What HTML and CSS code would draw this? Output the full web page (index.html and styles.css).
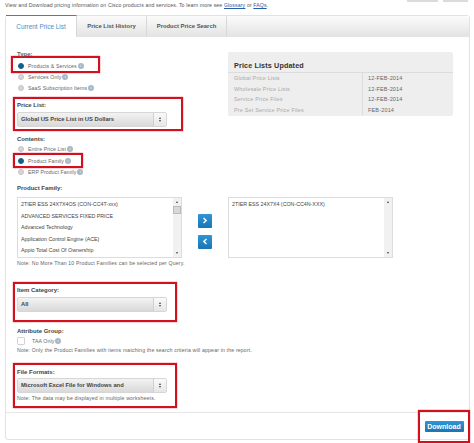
FILE: index.html
```html
<!DOCTYPE html>
<html lang="en">
<head>
    <meta charset="UTF-8">
    <meta name="viewport" content="width=device-width, initial-scale=1.0">
    <title>Current Price List</title>
    <link rel="stylesheet" href="styles.css">
</head>
<body>
    <div class="top-row">
        <p class="intro">View and Download pricing information on Cisco products and services. To learn more see <a href="#">Glossary</a> or <a href="#">FAQs</a>.</p>
        <div class="top-buttons">
            <span class="top-button wide"></span>
            <span class="top-button"></span>
        </div>
    </div>

    <div class="panel">
        <div class="tabs">
            <div class="tab active">Current Price List</div>
            <div class="tab">Price List History</div>
            <div class="tab">Product Price Search</div>
            <div class="tab-rest"></div>
        </div>

        <div class="panel-body">
            <div class="top-columns">
                <div class="options">
                    <div class="label type-label">Type:</div>
                    <div class="mark type-mark">
                        <div class="radio-row"><span class="radio on"></span>Products &amp; Services<span class="info">i</span></div>
                    </div>
                    <div class="radio-row after-mark"><span class="radio"></span>Services Only<span class="info">i</span></div>
                    <div class="radio-row"><span class="radio"></span>SaaS Subscription Items<span class="info">i</span></div>

                    <div class="mark price-mark">
                        <div class="label">Price List:</div>
                        <div class="select">
                            <span class="select-text">Global US Price List in US Dollars</span>
                            <span class="select-arrows"><i class="up"></i><i class="down"></i></span>
                        </div>
                    </div>

                    <div class="label contents-label">Contents:</div>
                    <div class="radio-row"><span class="radio"></span>Entire Price List<span class="info">i</span></div>
                    <div class="mark family-mark">
                        <div class="radio-row"><span class="radio on"></span>Product Family<span class="info">i</span></div>
                    </div>
                    <div class="radio-row after-mark"><span class="radio"></span>ERP Product Family<span class="info">i</span></div>
                </div>

                <div class="updated">
                    <h2>Price Lists Updated</h2>
                    <div class="updated-row"><span>Global Price Lists</span><b>12-FEB-2014</b></div>
                    <div class="updated-row"><span>Wholesale Price Lists</span><b>12-FEB-2014</b></div>
                    <div class="updated-row"><span>Service Price Files</span><b>12-FEB-2014</b></div>
                    <div class="updated-row"><span>Pre Set Service Price Files</span><b>FEB-2014</b></div>
                </div>
            </div>

            <div class="label family-label">Product Family:</div>
            <div class="picker">
                <div class="listbox">
                    <div class="list-items">
                        <div>2TIER ESS 24X7X4OS (CON-CC4T-xxx)</div>
                        <div>ADVANCED SERVICES FIXED PRICE</div>
                        <div>Advanced Technology</div>
                        <div>Application Control Engine (ACE)</div>
                        <div>Appio Total Cost Of Ownership</div>
                    </div>
                    <div class="scrollbar">
                        <i class="up"></i>
                        <span class="thumb"></span>
                        <i class="down"></i>
                    </div>
                </div>
                <div class="move-buttons">
                    <button class="move">
                        <svg width="6" height="7" viewBox="0 0 6 7"><path d="M1.5 1 4.2 3.5 1.5 6" fill="none" stroke="#fff" stroke-width="1.4"/></svg>
                    </button>
                    <button class="move">
                        <svg width="6" height="7" viewBox="0 0 6 7"><path d="M4.5 1 1.8 3.5 4.5 6" fill="none" stroke="#fff" stroke-width="1.4"/></svg>
                    </button>
                </div>
                <div class="listbox">
                    <div class="list-items">
                        <div>2TIER ESS 24X7X4 (CON-CC4N-XXX)</div>
                    </div>
                    <div class="scrollbar plain">
                        <i class="up"></i>
                        <i class="down"></i>
                    </div>
                </div>
            </div>
            <p class="note family-note">Note: No More Than 10 Product Families can be selected per Query.</p>

            <div class="mark category-mark">
                <div class="label">Item Category:</div>
                <div class="select">
                    <span class="select-text">All</span>
                    <span class="select-arrows"><i class="up"></i><i class="down"></i></span>
                </div>
            </div>

            <div class="label attribute-label">Attribute Group:</div>
            <div class="check-row"><span class="checkbox"></span>TAA Only<span class="info">i</span></div>
            <p class="note attribute-note">Note: Only the Product Families with items matching the search criteria will appear in the report.</p>

            <div class="mark format-mark">
                <div class="label">File Formats:</div>
                <div class="select">
                    <span class="select-text">Microsoft Excel File for Windows and</span>
                    <span class="select-arrows"><i class="up"></i><i class="down"></i></span>
                </div>
                <p class="note">Note: The data may be displayed in multiple worksheets.</p>
            </div>
        </div>

        <div class="panel-footer">
            <div class="download-mark">
                <button class="download">Download</button>
            </div>
        </div>
    </div>
</body>
</html>
```

FILE: styles.css
```css
* {
    box-sizing: border-box;
}

html, body {
    height: 443px;
    overflow: hidden;
}

body {
    margin: 0;
    background-color: white;
    font-family: "Liberation Sans", Arial, sans-serif;
    font-size: 6px;
    color: #555;
}

p {
    margin: 0;
}

/* top line */
.top-row {
    display: flex;
    justify-content: space-between;
    height: 15px;
    padding-left: 5px;
}

.intro {
    font-size: 5.2px;
    letter-spacing: 0.022em;
    line-height: 11px;
    color: #555;
}

.intro a {
    color: #2a5ca8;
}

.top-buttons {
    display: flex;
    gap: 5px;
    padding-right: 6px;
}

.top-button {
    width: 25px;
    height: 2px;
    background-color: #d8dcdc;
}

.top-button.wide {
    width: 31px;
}

/* panel */
.panel {
    width: 465px;
    height: 425px;
    margin-left: 5px;
    border: 1px solid #e2e2e2;
    border-radius: 3px;
    display: flex;
    flex-direction: column;
}

.tabs {
    display: flex;
    height: 21px;
    flex-shrink: 0;
    background: linear-gradient(#fbfbfb, #e3e3e3);
}

.tab {
    height: 21px;
    line-height: 20px;
    padding: 0 9px;
    border-right: 1px solid #d8d8d8;
    font-size: 5.9px;
    font-weight: bold;
    color: #555;
    white-space: nowrap;
}

.tab.active {
    width: 71px;
    height: 22px;
    background: white;
    border-top: 1px solid #3f83b5;
    color: #4a8fc4;
    font-size: 6.4px;
    font-weight: normal;
    text-align: center;
    padding: 0;
    margin-top: -1px;
    line-height: 21px;
}

.tab:nth-child(2) {
    width: 70px;
    text-align: center;
    padding: 0;
}

.tab:nth-child(3) {
    width: 80px;
    text-align: center;
    padding: 0;
}

.panel-body {
    flex: 1;
    padding: 0 0 0 11px;
}

.top-columns {
    display: flex;
}

.options {
    width: 211px;
}

.label {
    font-size: 6px;
    font-weight: bold;
    color: #444;
    line-height: 8px;
}

.type-label {
    padding-top: 13px;
    height: 19px;
    color: #666;
}

/* red highlight boxes */
.mark {
    border: 2px solid #d3101f;
    box-shadow: 0 0 1px #d3101f;
    margin-left: -4px;
}

.type-mark {
    width: 89px;
    height: 17px;
    margin-left: -6px;
    padding-left: 4px;
    padding-top: 2px;
}

.price-mark {
    width: 170px;
    height: 34px;
    margin-top: 3.5px;
    padding: 2px 0 0 2px;
}

.family-mark {
    width: 70px;
    height: 15px;
    margin-top: -1.5px;
    padding-left: 2px;
}

.category-mark {
    width: 164px;
    height: 40px;
    margin-top: 15px;
    padding: 2px 0 0 2px;
}

.format-mark {
    width: 164px;
    height: 45px;
    margin-top: 9px;
    padding: 3px 0 0 2px;
}

/* radios */
.radio-row, .check-row {
    display: flex;
    align-items: center;
    height: 11px;
    font-size: 5.2px;
    letter-spacing: 0.02em;
    color: #666;
}

.radio-row.after-mark {
    margin-top: -1.5px;
}

.radio {
    width: 6px;
    height: 6px;
    margin: 0 4px 0 1px;
    border-radius: 50%;
    background-color: #d6d6d6;
    border: 1px solid #c4c4c4;
}

.radio.on {
    background-color: #13608f;
    border-color: #13608f;
}

.info {
    width: 6px;
    height: 6px;
    margin-left: 1px;
    border-radius: 50%;
    background-color: #a8b8c4;
    color: white;
    font-size: 4px;
    line-height: 6px;
    text-align: center;
}

/* selects */
.select {
    display: flex;
    width: 150px;
    height: 15px;
    margin-top: 3px;
    border: 1px solid #d6d6d6;
    border-radius: 2px;
    background: linear-gradient(#f3f3f3, #d9d9d9);
}

.format-mark .select {
    margin-top: 2px;
}

.select-text {
    flex: 1;
    padding-left: 3px;
    font-size: 5.8px;
    font-weight: bold;
    line-height: 13px;
    color: #444;
    white-space: nowrap;
}

.select-arrows {
    width: 13px;
    display: flex;
    flex-direction: column;
    align-items: center;
    justify-content: center;
    gap: 1px;
    border-left: 1px solid #d0d0d0;
    background: linear-gradient(#fafafa, #e6e6e6);
}

.up, .down {
    display: block;
    width: 0;
    height: 0;
    border-left: 1.5px solid transparent;
    border-right: 1.5px solid transparent;
}

.up {
    border-bottom: 2px solid #444;
}

.down {
    border-top: 2px solid #444;
}

.contents-label {
    margin-top: 4px;
    height: 8.5px;
}

/* price lists updated */
.updated {
    width: 225px;
    height: 64px;
    margin-top: 15px;
    padding-top: 10px;
    background-color: #eeeeee;
    border-radius: 2px;
}

.updated h2 {
    margin: 0;
    height: 11px;
    padding-left: 6px;
    font-size: 7.2px;
    letter-spacing: 0.02em;
    line-height: 8px;
    color: #333;
    border-bottom: 1px solid #dcdcdc;
}

.updated-row {
    display: flex;
    height: 10.5px;
    line-height: 10.5px;
    font-size: 5.5px;
    letter-spacing: 0.03em;
    color: #aaa;
}

.updated-row span {
    width: 135px;
    padding-left: 6px;
    border-right: 1px solid #dcdcdc;
}

.updated-row b {
    padding-left: 5px;
    font-weight: normal;
    color: #666;
}

/* product family picker */
.family-label {
    margin-top: 6.5px;
    height: 13px;
}

.picker {
    display: flex;
    align-items: center;
}

.listbox {
    display: flex;
    width: 165px;
    height: 61px;
    border: 1px solid #dcdcdc;
    background-color: white;
}

.list-items {
    flex: 1;
    padding: 1px 3px;
    font-size: 5.3px;
    color: #444;
    line-height: 11.5px;
    white-space: nowrap;
}

.scrollbar {
    width: 8px;
    display: flex;
    flex-direction: column;
    align-items: center;
    justify-content: flex-start;
    padding: 3px 0;
    background-color: #f1f1f1;
}

.scrollbar .thumb {
    width: 8px;
    height: 8px;
    margin-top: 3px;
    background-color: #d8d8d8;
    border: 1px solid #bbb;
}

.scrollbar .down {
    margin-top: auto;
}

.move-buttons {
    width: 46px;
    padding-top: 7px;
    display: flex;
    flex-direction: column;
    align-items: center;
    gap: 7px;
}

.move {
    width: 14px;
    height: 14px;
    padding: 0;
    border: none;
    border-radius: 1px;
    background: linear-gradient(#2f96d6, #1a75b4);
    display: flex;
    align-items: center;
    justify-content: center;
}

.note {
    font-size: 5.2px;
    letter-spacing: 0.03em;
    color: #666;
    line-height: 8px;
    white-space: nowrap;
}

.family-note {
    margin-top: 1px;
}

.attribute-label {
    margin-top: 5px;
    height: 8px;
}

.check-row {
    height: 9px;
    margin-top: 1.5px;
}

.checkbox {
    width: 8px;
    height: 8px;
    margin-right: 7px;
    border: 1px solid #d4d4d4;
    border-radius: 1px;
    background-color: white;
}

.attribute-note {
    margin-top: 0.5px;
}

.format-mark .note {
    margin-top: 1px;
}

/* footer */
.panel-footer {
    height: 27px;
    flex-shrink: 0;
    border-top: 1px solid #e6e6e6;
    display: flex;
    justify-content: flex-end;
}

.download-mark {
    width: 52px;
    height: 33px;
    margin-top: -3px;
    margin-right: -1px;
    border: 2px solid #d3101f;
    box-shadow: 0 0 1px #d3101f;
    display: flex;
    justify-content: center;
    padding-top: 9px;
}

.download {
    width: 39px;
    height: 11px;
    padding: 0;
    border: none;
    border-radius: 1px;
    background: linear-gradient(#2f96d6, #1a75b4);
    color: white;
    font-family: "Liberation Sans", Arial, sans-serif;
    font-size: 7px;
    font-weight: bold;
    line-height: 11px;
}
```
